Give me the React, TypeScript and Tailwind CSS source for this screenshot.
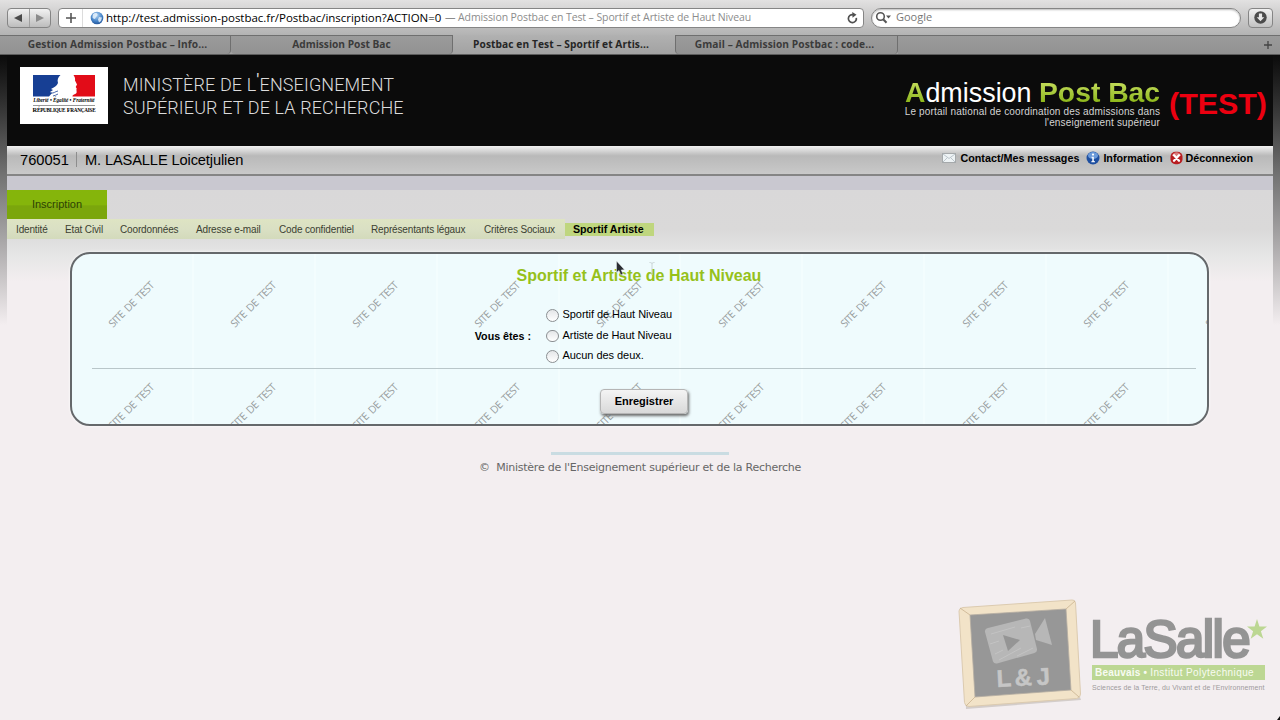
import type { ReactNode } from "react";

function Tab({ children, className }: { children: ReactNode; className: string }) {
  return (
    <div className={`flex h-full shrink-0 items-center justify-center whitespace-nowrap font-['Open_Sans',sans-serif] text-[10.2px] font-bold ${className}`}>
      {children}
    </div>
  );
}

const inactiveTab = "border-t border-[#6f6f6f] bg-linear-to-b from-[#9b9b9b] to-[#929292] text-[#3b3b3b]";

function Toolbar() {
  return (
    <div className="flex h-[35px] shrink-0 items-center bg-linear-to-b from-[#e2e1e1] to-[#b3b3b3] pl-[7px] pr-[7px] font-['Open_Sans',sans-serif]">
      <div className="flex h-[20px] w-[44px] items-center rounded-[4px] border border-[#858585] bg-linear-to-b from-[#f2f2f2] to-[#bdbdbd]">
        <div className="flex h-full flex-1 items-center justify-center border-r border-[#a0a0a0]">
          <svg width="8" height="8" viewBox="0 0 8 8"><path d="M8 0v8L0 4z" fill="#4a4a4a" /></svg>
        </div>
        <div className="flex h-full flex-1 items-center justify-center">
          <svg width="8" height="8" viewBox="0 0 8 8"><path d="M0 0v8l8-4z" fill="#8b8b8b" /></svg>
        </div>
      </div>
      <div className="ml-[7px] flex h-[20px] w-[806px] items-center whitespace-nowrap rounded-[4px] border border-[#858585] bg-white">
        <div className="flex h-full w-[24px] items-center justify-center border-r border-[#dcdcdc]">
          <svg width="10" height="10" viewBox="0 0 10 10"><path d="M5 0v10M0 5h10" stroke="#555" strokeWidth="1.6" /></svg>
        </div>
        <svg className="ml-[7px]" width="14" height="14" viewBox="0 0 14 14">
          <defs>
            <radialGradient id="globe" cx=".45" cy=".3" r=".75"><stop offset="0" stopColor="#b5d6f4" /><stop offset=".6" stopColor="#4583c8" /><stop offset="1" stopColor="#1f4f94" /></radialGradient>
          </defs>
          <circle cx="7" cy="7" r="6.3" fill="url(#globe)" />
          <path d="M3 3.2C5 1.5 7 2 7.5 3.3S6 5.5 5.5 7 3.5 8 2.500 6.500zM9 6l3 .5-1 3.500-2 1.500-1-3z" fill="#e6f2fb" opacity=".85" />
        </svg>
        <span className="ml-[2px] w-[336px] text-[11.5px] tracking-[-0.02px] text-black">http://test.admission-postbac.fr/Postbac/inscription?ACTION=0</span>
        <span className="ml-[3px] pt-px text-[10.5px] tracking-[-0.1px] text-[#8c8c8c]">— Admission Postbac en Test – Sportif et Artiste de Haut Niveau</span>
        <svg className="ml-auto mr-[5px]" width="11" height="12" viewBox="0 0 11 12">
          <path d="M9.300 5.800A4 4 0 1 1 6.200 2.700" fill="none" stroke="#505050" strokeWidth="1.700" />
          <path d="M5.300 0l4.200 2.800-4 3z" fill="#505050" />
        </svg>
      </div>
      <div className="ml-[7px] flex h-[20px] w-[370px] items-center rounded-full border border-[#858585] bg-white pl-[3px] shadow-[inset_0_1px_2px_#bbb]">
        <svg width="17" height="13" viewBox="0 0 17 13">
          <circle cx="5.500" cy="5.500" r="3.800" fill="none" stroke="#555" strokeWidth="1.600" />
          <path d="M8.200 8.200l3.300 3.600" stroke="#555" strokeWidth="2" />
          <path d="M11 4.500h5l-2.500 3z" fill="#555" />
        </svg>
        <span className="ml-[4px] text-[11px] text-[#777]">Google</span>
      </div>
      <div className="ml-[7px] flex h-[20px] w-[25px] items-center justify-center rounded-[4px] border border-[#858585] bg-linear-to-b from-[#f0f0f0] to-[#c2c2c2]">
        <svg width="13" height="13" viewBox="0 0 13 13">
          <circle cx="6.500" cy="6.500" r="6.200" fill="#4b4b4b" />
          <path d="M4.900 2.500h3.200v3.700h2.200L6.500 10.300 2.700 6.200h2.200z" fill="#e8e8e8" />
        </svg>
      </div>
    </div>
  );
}

function TabStrip() {
  return (
    <div className="flex h-[20px] shrink-0 border-b border-[#5c5c5c] bg-linear-to-b from-[#b1b1b1] to-[#a2a2a2]">
      <Tab className={`w-[231px] rounded-br-[4px] border-r ${inactiveTab}`}><span className="pl-[5px] tracking-[0.080px]">Gestion Admission Postbac – Info...</span></Tab>
      <Tab className={`w-[222px] rounded-b-[4px] border-r ${inactiveTab}`}>Admission Post Bac</Tab>
      <Tab className="w-[222px] text-[#262626]"><span className="pr-[6px] tracking-[0.080px]">Postbac en Test – Sportif et Artis...</span></Tab>
      <Tab className={`w-[223px] rounded-b-[4px] border-x ${inactiveTab}`}><span className="pr-[4px] tracking-[0.080px]">Gmail – Admission Postbac : code...</span></Tab>
      <div className={`flex flex-1 items-center justify-end pr-[8px] ${inactiveTab}`}>
        <svg width="8" height="8" viewBox="0 0 8 8"><path d="M4 0v8M0 4h8" stroke="#444" strokeWidth="1.300" /></svg>
      </div>
    </div>
  );
}

function RepublicLogo() {
  return (
    <div className="flex h-[57px] w-[88px] flex-col items-center bg-white pt-[8px] text-black">
      <svg width="62" height="22" viewBox="0 0 62 22">
        <path d="M0 0h27.500C25 2 24 5 25 8c-1 3-4 4.500-7 6l2 1-3 2 2 1-3 3.500H0z" fill="#173f94" />
        <path d="M40.500 0H62v21.500H39.500c0-2 2.500-2 4-3.500.500-2-.5-3 .2-4.500l-1-1.500 1.300-2.500-2-4c.5-2-.5-4-1.500-5.500z" fill="#e20c18" />
        <path d="M18 18c3 .5 4-1.500 7-2M20 21c2-.5 3-1 5-2" stroke="#173f94" strokeWidth=".8" fill="none" />
      </svg>
      <div className="whitespace-nowrap font-['Liberation_Serif',serif] text-[5.200px] font-bold italic leading-[7px]">Liberté • Égalité • Fraternité</div>
      <div className="mt-[1px] h-px w-[62px] bg-[#999]" />
      <div className="whitespace-nowrap font-['Liberation_Serif',serif] text-[6.400px] font-bold leading-[7px] tracking-[-0.250px]">R<span className="text-[5.200px]">ÉPUBLIQUE</span> F<span className="text-[5.200px]">RANÇAISE</span></div>
    </div>
  );
}

const green = "bg-linear-to-b from-[#c3dc58] from-20% to-[#8fb81c] to-80% bg-clip-text font-bold text-transparent";

function Header() {
  return (
    <div className="flex h-[91px] shrink-0 bg-[#0b0b0b] pl-[13px] pr-[6px] pt-[12px]">
      <RepublicLogo />
      <div className="ml-[15px] mt-[6px] whitespace-nowrap font-['Roboto',sans-serif] text-[18px] font-light leading-[23px] tracking-[0.120px] text-[#dcdcdc]">
        <div>MINISTÈRE DE L<span className="relative -top-[4px] font-normal">'</span>ENSEIGNEMENT</div>
        <div>SUPÉRIEUR ET DE LA RECHERCHE</div>
      </div>
      <div className="ml-auto mt-[11px] flex flex-col items-end whitespace-nowrap">
        <div className="h-[28px] text-[26.900px] leading-[28px] text-white">
          <span className={`text-[28.300px] ${green}`}>A</span>dmission <span className={`text-[28.300px] ${green}`}>Post Bac</span>
        </div>
        <div className="text-right text-[10px] leading-[11px] tracking-[0.165px] text-[#d4d4d4]">
          Le portail national de coordination des admissions dans<br />l'enseignement supérieur
        </div>
      </div>
      <div className="ml-[9px] mt-[18px] text-[30.400px] font-bold leading-[36px] text-[#ec0010]">(TEST)</div>
    </div>
  );
}

function UserBar() {
  return (
    <div className="flex h-[30px] shrink-0 items-center whitespace-nowrap border-b-2 border-[#858585] bg-linear-to-b from-[#f2f2f2] via-[#b9b9b9] via-35% to-[#c9c9c9] pb-[1px] pl-[13px] pr-[20px] text-[14.670px] text-black">
      <span>760051</span>
      <span className="ml-[7px] h-[15px] w-px bg-[#8d8d8d]" />
      <span className="ml-[8px] tracking-[-0.130px]">M. LASALLE Loicetjulien</span>
      <div className="ml-auto flex items-center pb-[2px] text-[10.760px] font-bold">
        <svg width="14" height="10" viewBox="0 0 14 10"><rect x=".5" y=".5" width="13" height="9" fill="#eef3f5" stroke="#a5a9ab" /><path d="M1 1l6 4.500L13 1M1 9l4.500-4.500M13 9L8.500 4.500" fill="none" stroke="#b5c0c6" strokeWidth=".9" /></svg>
        <span className="ml-[4px]">Contact/Mes messages</span>
        <svg className="ml-[7px]" width="14" height="14" viewBox="0 0 14 14"><circle cx="7" cy="7" r="6.500" fill="#1e4fa0" /><ellipse cx="7" cy="4.500" rx="5" ry="3.600" fill="#6c9bda" /><path d="M5.500 5.800h2.300v4.400H9v1H5.300v-1h1V6.800h-.8z" fill="#fff" /><circle cx="7" cy="3.600" r="1.100" fill="#fff" /></svg>
        <span className="ml-[3px]">Information</span>
        <svg className="ml-[7px]" width="13" height="14" viewBox="0 0 13 14"><rect x=".5" y=".8" width="12" height="12.400" rx="5" fill="#b81d20" /><path d="M2 5c1-5 8-5 9 0z" fill="#d97a7a" /><path d="M4 4.300l5 5.400M9 4.300L4 9.700" stroke="#fff" strokeWidth="2.300" strokeLinecap="round" /></svg>
        <span className="ml-[3px]">Déconnexion</span>
      </div>
    </div>
  );
}

const subItems = [
  { label: "Identité", cls: "w-[49px]" },
  { label: "Etat Civil", cls: "w-[55px]" },
  { label: "Coordonnées", cls: "w-[76px]" },
  { label: "Adresse e-mail", cls: "w-[83px]" },
  { label: "Code confidentiel", cls: "w-[92px]" },
  { label: "Représentants légaux", cls: "w-[113px]" },
  { label: "Critères Sociaux", cls: "w-[81px]" },
];

function Navigation() {
  return (
    <div className="flex flex-col whitespace-nowrap">
      <div className="flex h-[29px] w-[100px] items-center justify-center bg-linear-to-b from-[#85b50b] from-50% to-[#7ba60c] to-55% text-[11px] text-[#2d4205]">Inscription</div>
      <div className="flex h-[20px] items-start text-[10px] text-[#3b3f31]">
        <div className="flex h-full w-[558px] items-center bg-linear-to-b from-[#dee4c3] via-[#dae0c4] to-[#d3dabb] pl-[9px] tracking-[-0.150px]">
          {subItems.map((s) => <span key={s.label} className={s.cls}>{s.label}</span>)}
        </div>
        <div className="mt-[4px] flex h-[13px] w-[89px] items-center bg-[#bfd67e] pl-[8px] text-[10.650px] font-bold text-black">Sportif Artiste</div>
      </div>
    </div>
  );
}

function Watermark() {
  return (
    <div className="absolute inset-0 overflow-hidden rounded-[18px]">
      <div className="grid w-[1220px] auto-rows-[102px] grid-cols-[repeat(10,121.9px)]">
        {Array.from({ length: 20 }, (_, i) => (
          <div key={i} className="flex items-center justify-center border-r-2 border-[#f3fdfe]">
            <span className="-rotate-45 whitespace-nowrap font-['Open_Sans',sans-serif] text-[10.500px] tracking-[-0.600px] text-[#959a9b] [word-spacing:2px]">SITE DE TEST</span>
          </div>
        ))}
      </div>
    </div>
  );
}

function Choice({ label }: { label: string }) {
  return (
    <label className="flex h-[20.500px] items-center">
      <span className="mt-[2px] size-[12.500px] rounded-full border border-[#8b8f92] bg-linear-to-b from-[#e4e6e8] to-white" />
      <span className="ml-[4px] tracking-[-0.050px]">{label}</span>
    </label>
  );
}

function FormPanel() {
  return (
    <div className="relative ml-[63px] mt-[13px] h-[174px] w-[1139px] rounded-[20px] border-2 border-[#65686b] bg-[#effbfd] shadow-[0_0_3px_#fff]">
      <Watermark />
      <div className="relative flex flex-col text-[11px] text-black">
        <h1 className="mt-[12px] pr-px text-center text-[16px] font-bold leading-[20px] text-[#96c11b]">Sportif et Artiste de Haut Niveau</h1>
        <div className="ml-[20px] mr-[11px] mt-[18px] flex h-[65px] items-start border-b border-[#b9c6c9]">
          <div className="flex h-[64px] w-[439px] items-center justify-end text-[10.700px] font-bold">Vous êtes :</div>
          <div className="ml-[15px] flex flex-col">
            <Choice label="Sportif de Haut Niveau" />
            <Choice label="Artiste de Haut Niveau" />
            <Choice label="Aucun des deux." />
          </div>
        </div>
        <button className="ml-[528px] mt-[20px] h-[25px] w-[88px] rounded-[4px] border border-[#b5b5b5] bg-linear-to-b from-[#f4f4f4] to-[#d9d9d9] text-[11px] font-bold shadow-[1px_2px_3px_#6b6b6b]">Enregistrer</button>
      </div>
    </div>
  );
}

function Cursors() {
  return (
    <div className="absolute left-[615px] top-[260px]">
      <svg width="42" height="18" viewBox="0 0 42 18">
        <path d="M1.500 1v11.500l2.500-2 1.800 4.500 2.200-1-1.800-4 3.300-.3z" fill="#2a2d33" stroke="#e8eef0" strokeWidth=".5" />
        <path d="M34.500 2.500c1.500 0 2.500.3 2.500 1.500 0-1.200 1-1.500 2.500-1.500M37 4v11" stroke="#c9d4d6" fill="none" />
      </svg>
    </div>
  );
}

function SchoolBadge() {
  return (
    <div className="absolute left-[957px] top-[598px] flex">
      <svg width="126" height="112" viewBox="0 0 126 112" fontFamily="'Liberation Sans', sans-serif">
        <path d="M5 20l4 91 115-9-2-6z" fill="#d3cdca" />
        <path d="M2 13q0-3 4-3.500L115 2q3-.500 3.500 3l5 91q0 4-4 4.500L12 108.500q-4 0-4.500-4z" fill="#f2e3c8" stroke="#dccbb0" />
        <path d="M3 10l10 7M118 3l-9 8M9 108l9-9M122 99l-8-7" stroke="#c9b28f" strokeWidth=".8" />
        <path d="M13 17l96-6 5 81-96 7z" fill="#979797" stroke="#b5ada2" strokeWidth=".8" />
        <path d="M28 34q-.500-3 3-4l38-9.500q3.500-.500 4 2.500l7 28q.500 3-2.500 4L40 65.500q-3 .500-4-2z" fill="#b7b7b7" />
        <path d="M78 36l10-16 7 27-16-5z" fill="#b7b7b7" />
        <path d="M46 37l17 5-12 11z" fill="#959595" />
        <path d="M34 36l24-7M33 46l9-3M42 62l22-12M64 30l9-2M38 56l8-4M60 58l16-8" stroke="#c3c3c3" strokeWidth="1" />
        <text x="40 58 80" y="89" fontSize="24" fontWeight="bold" fill="#c6c6c6" stroke="#c6c6c6" strokeWidth=".5" transform="rotate(-3 40 89)">L&amp;J</text>
      </svg>
      <div className="ml-[9px] mt-[14px] flex flex-col whitespace-nowrap">
        <div className="flex h-[53px]">
          <span className="-ml-[2px] w-[157px] pt-[3px] text-[51px] leading-[50px] tracking-[-1.600px] text-[#949494] [-webkit-text-stroke:2.600px_#949494]">LaSalle</span>
          <svg className="mt-[7px]" width="20" height="22" viewBox="0 0 20 22"><path d="M10 0l2.400 7.500H20l-6.100 4.700 2.400 7.600L10 15.200l-6.300 4.600 2.400-7.600L0 7.500h7.600z" fill="#bcd793" /></svg>
        </div>
        <div className="flex h-[15px] w-[173px] items-center bg-[#bcd793] pl-[3px] text-[10px] text-[#f8fbf2]"><b className="mr-[3px] tracking-[0.200px]">Beauvais •</b><span className="tracking-[0.400px]">Institut Polytechnique</span></div>
        <div className="mt-[3px] text-[7px] leading-[10px] tracking-[0.130px] text-[#9e9b9c]">Sciences de la Terre, du Vivant et de l'Environnement</div>
      </div>
    </div>
  );
}

const edge = "h-[270px] w-[7px] shrink-0 bg-linear-to-b from-[#0b0b0b] via-[#747474] via-45% to-[#f3eef0]";

export default function App() {
  return (
    <div className="relative flex h-[720px] w-[1280px] flex-col overflow-hidden bg-[#f3eef0] font-['Liberation_Sans',Arial,sans-serif]">
      <Toolbar />
      <TabStrip />
      <div className="flex">
        <div className={edge} />
        <div className="flex w-[1266px] flex-col">
          <Header />
          <UserBar />
          <div className="h-[14px] bg-[#c9c8d0]" />
          <div className="bg-[linear-gradient(#d9d8d9,#dad9d9_40px,#e7e7e7_68px,#f3eef0_92px)]">
            <Navigation />
            <FormPanel />
          </div>
          <div className="mt-[26px] flex flex-col items-center">
            <div className="h-[3px] w-[178px] bg-[#c9dce2]" />
            <div className="mt-[5px] whitespace-pre font-['DejaVu_Sans',Verdana,sans-serif] text-[11px] leading-[15px] tracking-[-0.240px] text-[#666]">©  Ministère de l'Enseignement supérieur et de la Recherche</div>
          </div>
        </div>
        <div className={edge} />
      </div>
      <Cursors />
      <SchoolBadge />
      <svg className="absolute bottom-0 right-0" width="3" height="4" viewBox="0 0 3 4"><path d="M3 0v4H0z" fill="#111" /></svg>
    </div>
  );
}
